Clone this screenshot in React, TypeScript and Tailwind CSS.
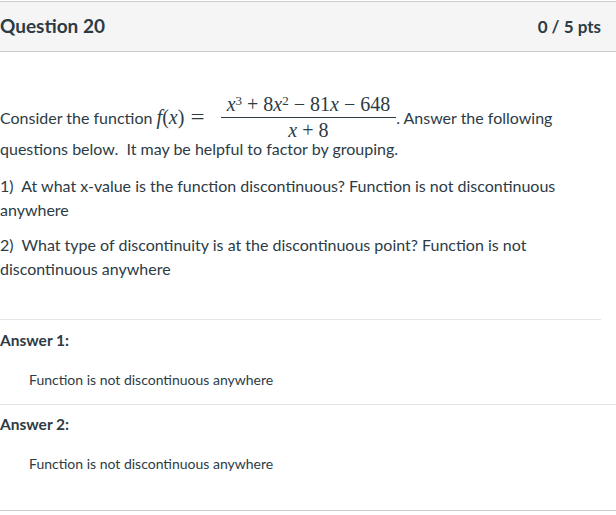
import React from 'react';

const mathFont = { fontFamily: '"Liberation Serif", "DejaVu Serif", serif' };

const Fraction = () => (
  <span className="inline-flex flex-col items-center align-[13px] ml-[17px] text-[20px]" style={mathFont}>
    <span className="px-[6px] pb-[2px] leading-[21px] whitespace-nowrap">
      <i>x</i>
      <sup className="text-[13px]">3</sup> + 8<i>x</i>
      <sup className="text-[13px]">2</sup> − 81<i>x</i> − 648
    </span>
    <span className="self-stretch border-t border-[#2d3b45]" />
    <span className="pt-[6px] pb-[1px] leading-[12px] whitespace-nowrap">
      <i>x</i> + 8
    </span>
  </span>
);

const AnswerBlock = ({ label, value, last }: { label: string; value: string; last?: boolean }) => (
  <div className={last ? 'border-t border-[#e5e5e5] pt-[9px] pb-[36px]' : 'border-t border-[#e5e5e5] pt-[10px] pb-[14px] mr-[15px]'}>
    <div className="text-[15.5px] font-bold leading-5">{label}</div>
    <div className="pl-[29px] pt-[20px] text-[14px] leading-5">{value}</div>
  </div>
);

export default function App() {
  return (
    <div className="w-[616px] h-[515px] bg-white text-[#2d3b45] overflow-hidden" style={{ fontFamily: 'Lato, "Open Sans", sans-serif' }}>
      <div className="mt-px h-[51px] border-y border-[#c7cdd1] bg-[#f5f5f5] flex items-center justify-between pr-[15px]">
        <h2 className="text-[19px] font-bold">Question 20</h2>
        <span className="text-[17px] font-bold">0 / 5 pts</span>
      </div>

      <div className="pt-[42px] text-[16px] leading-6 pr-[40px]">
        <p>
          Consider the function{' '}
          <span className="text-[20px]" style={mathFont}>
            <i>f</i>(<i>x</i>)<span className="ml-[8px] inline-block scale-x-125">=</span>
          </span>
          <Fraction />
          <span>. Answer the following questions below.&nbsp; It may be helpful to factor by grouping.</span>
        </p>
        <p className="mt-[13px]">
          1)&nbsp; At what x-value is the function discontinuous? Function is not discontinuous anywhere
        </p>
        <p className="mt-[11px]">
          2)&nbsp; What type of discontinuity is at the discontinuous point? Function is not discontinuous anywhere
        </p>
      </div>

      <div className="mt-[38px]">
        <AnswerBlock label="Answer 1:" value="Function is not discontinuous anywhere" />
        <div className="border-b border-[#c7cdd1]">
          <AnswerBlock label="Answer 2:" value="Function is not discontinuous anywhere" last />
        </div>
      </div>
    </div>
  );
}
